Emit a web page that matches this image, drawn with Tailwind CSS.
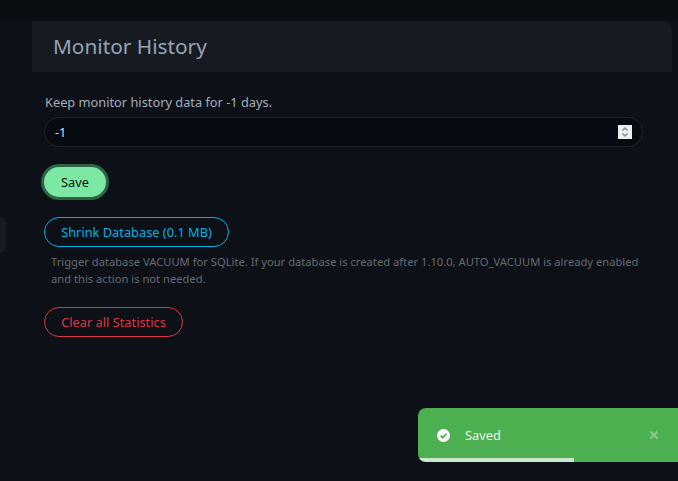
<!DOCTYPE html>
<html lang="en">
<head>
    <meta charset="UTF-8">
    <title>Monitor History</title>
    <script src="https://cdn.jsdelivr.net/npm/@tailwindcss/browser@4"></script>
</head>
<body class="relative w-[678px] h-[481px] overflow-hidden bg-[#0d1117] font-['Noto_Sans',sans-serif] text-[14px]">
    <!-- top strip -->
    <div class="h-[21px] bg-[#0a0d11]"></div>

    <div class="flex">
        <!-- sidebar remnant -->
        <div class="w-[32px] pt-[196px]">
            <div class="w-[6px] h-[36px] bg-[#161b22] rounded-r-[8px]"></div>
        </div>

        <div class="w-[640px]">
            <div class="h-[51px] pl-[21px] flex items-center bg-[#161b22] rounded-tr-[10px]">
                <h1 class="text-[20.8px] text-[#98a3b2] leading-none">Monitor History</h1>
            </div>

            <div class="pl-[12px] pt-[21px]">
                <label class="block h-[24px] pl-[1px] leading-[19px] text-[#a3adbb] text-[12.8px]">Keep monitor history data for -1 days.</label>
                <div class="w-[599px] h-[30px] pl-[10px] pr-[10px] flex items-center justify-between rounded-full border border-[#1c2430] bg-[#070a10]">
                    <span class="pt-[1px] text-[12.8px] text-[#d5dbe3]">-1</span>
                    <span class="w-[14px] h-[14px] bg-[#ecedef] flex items-center justify-center">
                        <svg width="10" height="12" viewBox="0 0 10 12" fill="none" stroke="#8b8b92" stroke-width="1.5">
                            <path d="M2.5 4.5L5 2l2.5 2.5M2.5 7.5L5 10l2.5-2.5"/>
                        </svg>
                    </span>
                </div>

                <button class="block mt-[20px] w-[62px] h-[30px] pt-[1px] rounded-full bg-[#7ce8a4] ring-[3px] ring-[#2b6344] text-[#0d1117] text-[12.8px]">Save</button>

                <button class="block mt-[20px] w-[185px] h-[30px] pt-[1px] rounded-full border border-[#00b0e0] text-[#00b0e0] text-[12.8px]">Shrink Database (0.1 MB)</button>
                <p class="mt-[6px] pl-[7px] w-[600px] text-[11.2px] leading-[17px] text-[#646a72]">Trigger database VACUUM for SQLite. If your database is created after 1.10.0, AUTO_VACUUM is already enabled and this action is not needed.</p>

                <button class="block mt-[20px] w-[139px] h-[30px] pt-[1px] rounded-full border border-[#dc3545] text-[#dc3545] text-[12.8px]">Clear all Statistics</button>
            </div>
        </div>
    </div>

    <!-- toast -->
    <div class="absolute left-[418px] top-[408px] w-[270px] h-[54px] rounded-[8px] overflow-hidden bg-[#4caf50] text-white">
        <div class="flex items-center h-[54px] pl-[19px]">
            <svg width="13" height="13" viewBox="0 0 13 13" class="shrink-0">
                <circle cx="6.5" cy="6.5" r="6.5" fill="#fff"/>
                <path d="M3.6 6.7l2 2 3.8-3.9" fill="none" stroke="#4caf50" stroke-width="1.7"/>
            </svg>
            <span class="ml-[15px] pt-[1px] text-[12.8px] text-[#e8f6e9]">Saved</span>
            <svg width="8" height="8" viewBox="0 0 8 8" class="ml-[149px] shrink-0" stroke="#fff" stroke-opacity="0.35" stroke-width="2">
                <path d="M0.5 0.5l7 7M7.5 0.5l-7 7"/>
            </svg>
        </div>
        <div class="absolute left-0 bottom-0 w-[156px] h-[4px] bg-white/70"></div>
    </div>
</body>
</html>
